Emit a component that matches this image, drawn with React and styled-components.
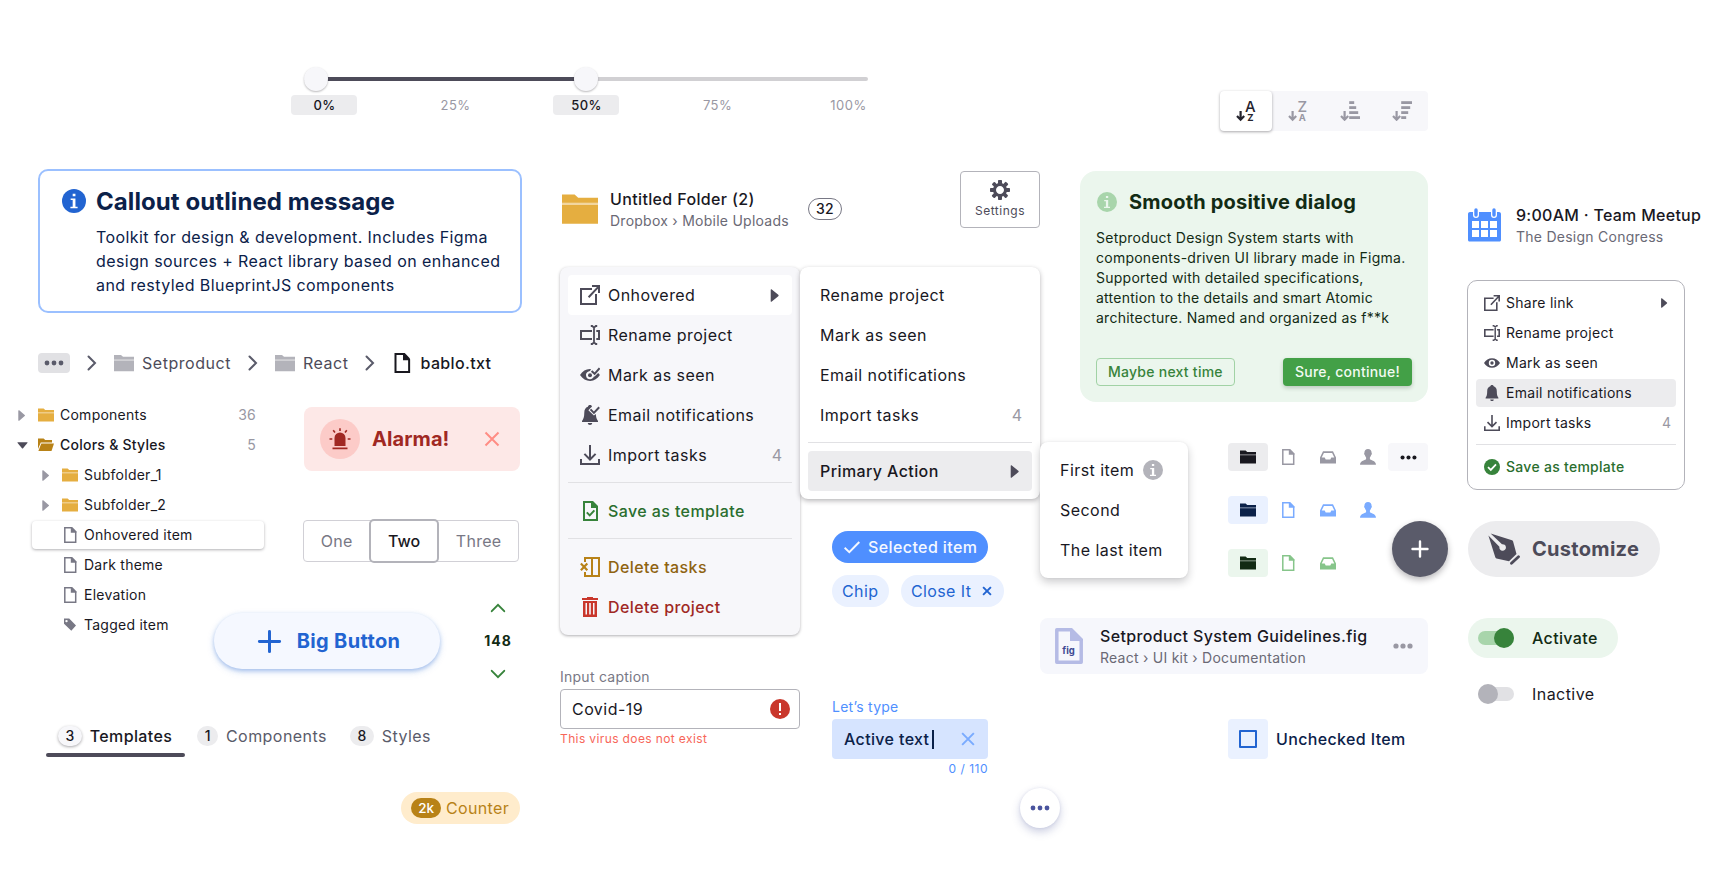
import React, { useState } from "react";
import styled, { createGlobalStyle, css } from "styled-components";

const Svg = ({ size = 20, box = 20, children, ...rest }) => (
  <svg
    width={size}
    height={size}
    viewBox={`0 0 ${box} ${box}`}
    fill="none"
    stroke="none"
    {...rest}
  >
    {children}
  </svg>
);

const line = { stroke: "currentColor", strokeWidth: 2 };

const ShareIcon = ({ size }) => (
  <Svg size={size}>
    <path {...line} d="M12 4H1v15h15V9" />
    <path {...line} d="M8.6 12.2L18.6 1.6M12 1h7v7" />
  </Svg>
);

const RenameIcon = ({ size }) => (
  <Svg size={size}>
    <path {...line} d="M12 6H1v8h11M16.3 6H19v8h-2.7" />
    <path {...line} strokeWidth="1.8" d="M14 2v16M10.8 1h1.4L14 2.6 15.8 1h1.4M10.8 19h1.4l1.8-1.6 1.8 1.6h1.4" />
  </Svg>
);

const EyeIcon = ({ size }) => (
  <Svg size={size}>
    <path
      fill="currentColor"
      fillRule="evenodd"
      d="M10 4C5.8 4 2.4 6.4 0 10c2.4 3.6 5.8 6 10 6s7.6-2.4 10-6c-2.4-3.6-5.8-6-10-6zm0 10a4 4 0 110-8 4 4 0 010 8z"
    />
    <circle cx="10" cy="10" r="2.1" fill="currentColor" />
  </Svg>
);

const EyeCheckIcon = ({ size }) => (
  <Svg size={size}>
    <path
      fill="currentColor"
      d="M11 4.1C6.5 3.6 2.7 6 0 10c2.6 3.7 6.1 6 10.2 6 4 0 7.3-2.3 9.7-5.9l-1.7-2.2-3.6 3.6-.7.1c-.4 1.5-1.9 2.6-3.8 2.6a4 4 0 01-1.6-7.7L10 6z"
    />
    <circle cx="10" cy="10.2" r="2" fill="currentColor" />
    <path {...line} d="M11.6 6.1l3 2.7 5-5.7" />
  </Svg>
);

const BellIcon = ({ size }) => (
  <Svg size={size}>
    <path
      fill="currentColor"
      d="M10 0c1.2 0 2 .7 2.1 1.7C14.6 2.5 16 4.7 16 7.5c0 4.5.6 6.5 2 8.5v1H2v-1c1.4-2 2-4 2-8.5 0-2.8 1.4-5 3.9-5.8C8 .7 8.8 0 10 0zM7.8 18h4.4c0 1.2-.9 2-2.2 2s-2.2-.8-2.2-2z"
    />
  </Svg>
);

const BellCheckIcon = ({ size }) => (
  <Svg size={size}>
    <path
      fill="currentColor"
      d="M10 0c1.1 0 1.8.5 2 1.5l-3.6 3.7 5.5 5.3 1.9-1.5c.2 3 .8 5 2.2 7v1H2v-1c1.4-2 2.3-4 2.3-8.5 0-2.8 1.1-5 3.6-5.8C8.100.7 8.8 0 10 0zM7.8 18h4.4c0 1.2-.9 2-2.2 2s-2.2-.8-2.2-2z"
    />
    <path {...line} d="M10.5 4.4l3.4 3.5 5.3-5.7" />
  </Svg>
);

const ImportIcon = ({ size }) => (
  <Svg size={size}>
    <path {...line} d="M10 0v14M4.4 8.9l5.6 5.6 5.6-5.6M1 14v5h18v-5" />
  </Svg>
);

const SavedIcon = () => (
  <Svg>
    <path {...line} d="M12 1H4v18h13V6" />
    <path fill="currentColor" d="M11 0h2l5 5v2h-7z" />
    <path {...line} d="M6.8 11.4l2.9 3 4.7-5" />
  </Svg>
);

const RemoveColumnIcon = () => (
  <Svg>
    <path {...line} d="M5 5V1h14v18H5v-4M12 1v18" />
    <path {...line} strokeWidth="2.2" d="M.9 6.6l6.4 6.6M7.3 6.6L.9 13.2" />
  </Svg>
);

const TrashIcon = () => (
  <Svg>
    <path
      fill="currentColor"
      fillRule="evenodd"
      d="M7 0h6v1h5v2H2V1h5zM3 4h14v16H3zM5.5 6v11.5H7V6zM9.2 6v11.5h1.6V6zM13 6v11.5h1.5V6z"
    />
  </Svg>
);

const CheckCircleIcon = ({ size }) => (
  <Svg size={size}>
    <circle cx="10" cy="10" r="10" fill="currentColor" />
    <path d="M5 10.3l3.5 3.4L15 6.8" stroke="#fff" strokeWidth="2.2" />
  </Svg>
);

const InfoIcon = ({ size, mark = "#fff" }) => (
  <Svg size={size}>
    <circle cx="10" cy="10" r="10" fill="currentColor" />
    <path fill={mark} d="M8.9 4h2.3v2H8.9zM7.2 8h4v6.8H13V16H7v-1.2h1.9V9.2H7.2z" />
  </Svg>
);

const ErrorIcon = () => (
  <Svg>
    <circle cx="10" cy="10" r="10" fill="#c9372c" />
    <path fill="#fff" d="M9 4h2v8H9zM9 14h2v2H9z" />
  </Svg>
);

const FolderIcon = ({ size = 16 }) => (
  <Svg size={size} box={16}>
    <path fill="currentColor" d="M0 1.5h5.6L7.2 3H16v2.2H0zM0 6.2h16v8.3H0z" />
    <path fill="currentColor" opacity="0.5" d="M0 5h16v1.4H0z" />
  </Svg>
);

const FolderOpenIcon = () => (
  <Svg size={16} box={16}>
    <path fill="currentColor" d="M0 1.5h5.6L7.2 3H14v2.5H2.8L0 12z" />
    <path fill="currentColor" d="M3.3 6.5H16L13.5 14H.4z" />
  </Svg>
);

const DocIcon = ({ size = 16, weight = 1.5 }) => (
  <Svg size={size} box={16}>
    <path stroke="currentColor" strokeWidth={weight} d="M9.5.8H2.8v14.4h10.9V5" />
    <path fill="currentColor" d="M8.8 0h1.4l4.2 4.3v1.5H8.8z" />
  </Svg>
);

const TagIcon = () => (
  <Svg size={16} box={16}>
    <path
      fill="currentColor"
      fillRule="evenodd"
      d="M2 1.5h5.2L14 8.6 9.3 13.7 2 6.8zM4.5 2.9a1.2 1.2 0 100 2.4 1.2 1.2 0 000-2.4z"
    />
  </Svg>
);

const TrayIcon = () => (
  <Svg size={16} box={16}>
    <path
      fill="currentColor"
      fillRule="evenodd"
      d="M3 2.3h10l3 6.2v6H0v-6zM3.9 4L1.7 8.5h3l1 2h4.6l1-2h3L12.1 4z"
    />
  </Svg>
);

const UserIcon = () => (
  <Svg size={16} box={16}>
    <path
      fill="currentColor"
      d="M8 0c2.2 0 3.6 1.5 3.6 3.7 0 .4.3.5.3 1 0 .7-.4 1-.7 1.4-.2.9-.7 1.7-1.3 2.3v1.7c.2 1.3 6.1 1.4 6.1 5.7H0c0-4.3 5.9-4.4 6.1-5.7V8.4c-.6-.6-1.1-1.4-1.3-2.3-.3-.4-.7-.7-.7-1.4 0-.5.3-.6.3-1C4.4 1.5 5.8 0 8 0z"
    />
  </Svg>
);

const DotsIcon = ({ size = 20, r = 2.4 }) => (
  <Svg size={size}>
    <circle cx="3" cy="10" r={r} fill="currentColor" />
    <circle cx="10" cy="10" r={r} fill="currentColor" />
    <circle cx="17" cy="10" r={r} fill="currentColor" />
  </Svg>
);

const CrossIcon = ({ size = 20, weight = 2 }) => (
  <Svg size={size}>
    <path stroke="currentColor" strokeWidth={weight} d="M3.5 3.5l13 13M16.5 3.5l-13 13" />
  </Svg>
);

const PlusIcon = ({ size = 20, weight = 2 }) => (
  <Svg size={size}>
    <path
      stroke="currentColor"
      strokeWidth={weight}
      strokeLinecap="round"
      d="M10 2.5v15M2.5 10h15"
    />
  </Svg>
);

const ChevronIcon = ({ dir = "right" }) => {
  const paths = {
    right: "M6.5 3.5L13 10l-6.5 6.5",
    up: "M2.2 14L10 6l7.8 8",
    down: "M2.2 6l7.8 8 7.8-8",
  };
  return (
    <Svg size={dir === "right" ? 20 : 16}>
      <path
        stroke="currentColor"
        strokeWidth={dir === "right" ? 2 : 2.4}
        strokeLinecap="round"
        d={paths[dir]}
      />
    </Svg>
  );
};

const CaretIcon = ({ size = 12, down }) => (
  <Svg size={size} box={12}>
    <path
      fill="currentColor"
      d={
        down
          ? "M1 2.5h10c.5 0 .6.5.3.9L6.6 9c-.4.4-.8.4-1.2 0L.7 3.4c-.3-.4-.2-.9.3-.9z"
          : "M2.5.8c0-.6.5-.8 1-.4l6 5c.5.4.5.8 0 1.2l-6 5c-.5.4-1 .2-1-.4z"
      }
    />
  </Svg>
);

const CogIcon = () => (
  <Svg>
    <path
      fill="currentColor"
      d="M19 8h-2.31c-.14-.46-.33-.89-.56-1.3l1.7-1.7a.996.996 0 000-1.41l-1.41-1.41a.996.996 0 00-1.41 0l-1.7 1.7c-.41-.22-.84-.41-1.3-.55V1c0-.55-.45-1-1-1H9c-.55 0-1 .45-1 1v2.33c-.48.14-.94.34-1.37.58L5 2.28a.972.972 0 00-1.36 0L2.28 3.64c-.37.38-.37.99 0 1.36L3.9 6.62c-.24.44-.44.89-.59 1.38H1c-.55 0-1 .45-1 1v2c0 .55.45 1 1 1h2.31c.14.46.33.89.56 1.3L2.17 15a.996.996 0 000 1.41l1.41 1.41c.39.39 1.02.39 1.41 0l1.7-1.7c.41.22.84.41 1.3.55V19c0 .55.45 1 1 1h2c.55 0 1-.45 1-1v-2.33c.48-.14.94-.35 1.37-.59L15 17.72c.37.37.98.37 1.36 0l1.36-1.36c.37-.37.37-.98 0-1.36l-1.62-1.62c.24-.43.45-.89.6-1.38H19c.55 0 1-.45 1-1V9c0-.55-.45-1-1-1zm-9 6c-2.21 0-4-1.79-4-4s1.79-4 4-4 4 1.79 4 4-1.79 4-4 4z"
    />
  </Svg>
);

const SirenIcon = () => (
  <Svg size={22} box={22}>
    <path
      fill="currentColor"
      d="M5.5 18V10a5.5 5.5 0 0111 0v8zM3.5 19.5h15v1.8h-15z"
    />
    <path
      {...line}
      strokeWidth="1.6"
      d="M11 .3V3M4.2 2.3L6 4.6M17.8 2.3L16 4.6M.5 11H3.3M18.7 11h2.8"
    />
  </Svg>
);

const CalendarIcon = () => (
  <Svg size={34} box={34}>
    <path
      fill="currentColor"
      fillRule="evenodd"
      d="M2 4h3v3a3 3 0 006 0V4h12v3a3 3 0 006 0V4h2c1.1 0 2 .9 2 2v26c0 .8-.7 1.5-1.5 1.5h-30C.7 33.5 0 32.8 0 32V6c0-1.1.9-2 2-2zM4 13v7h7v-7zM13 13v7h7v-7zM22 13v7h7v-7zM4 22v7h7v-7zM13 22v7h7v-7zM22 22v7h7v-7z"
    />
    <path stroke="currentColor" strokeWidth="3.4" strokeLinecap="round" d="M8 2v5M26 2v5" />
  </Svg>
);

const NibIcon = () => (
  <Svg size={32} box={32}>
    <path
      fill="currentColor"
      d="M2.6.4L24 7.3c.6.2 1 .6 1.1 1.2L28.5 21 21 28.2 8.5 25.4c-.6-.1-1-.5-1.2-1.1L.4 2.6l11 11.2A3.3 3.3 0 1014 11.2z"
    />
    <path stroke="currentColor" strokeWidth="2.8" strokeLinecap="round" d="M23.5 30.3l7-6.6" />
  </Svg>
);

const FigFileIcon = () => (
  <svg width="28" height="36" viewBox="0 0 28 36">
    <path fill="none" stroke="#b5bbe5" strokeWidth="3.5" strokeLinejoin="round" d="M16 1.8H1.8v32.4h24.4V13" />
    <path fill="#b5bbe5" d="M15 0h2l11 11v2H15z" />
    <text x="13.5" y="26" textAnchor="middle" fontFamily="Inter, sans-serif" fontSize="9.5" fontWeight="700" letterSpacing="0" fill="#3f4a93">
      fig
    </text>
  </svg>
);

const SortArrow = () => (
  <path {...line} strokeWidth="2.2" d="M4.6 10V19M1 15l3.6 3.7L8.2 15" />
);

const SortLettersIcon = ({ top, bottom }) => (
  <Svg overflow="visible">
    <SortArrow />
    <text x="14.3" y="11" textAnchor="middle" fontFamily="Inter, sans-serif" fontSize="15" fontWeight="500" fill="currentColor">
      {top}
    </text>
    <text x="14.3" y="20" textAnchor="middle" fontFamily="Inter, sans-serif" fontSize="9.5" fontWeight="700" fill="currentColor">
      {bottom}
    </text>
  </Svg>
);

const SortBarsIcon = ({ widths }) => (
  <Svg>
    <SortArrow />
    {widths.map((w, i) => (
      <path key={w} stroke="currentColor" strokeWidth="2.8" d={`M9.2 ${1.6 + i * 5}h${w}`} />
    ))}
  </Svg>
);

const MAIN_MENU = [
  { label: "Onhovered", icon: <ShareIcon />, arrow: true, bg: "#fff" },
  { label: "Rename project", icon: <RenameIcon /> },
  { label: "Mark as seen", icon: <EyeCheckIcon /> },
  { label: "Email notifications", icon: <BellCheckIcon /> },
  { label: "Import tasks", icon: <ImportIcon />, count: 4 },
  { divider: true },
  { label: "Save as template", icon: <SavedIcon />, color: "#2a6e2e", iconColor: "#37833b", medium: true },
  { divider: true },
  { label: "Delete tasks", icon: <RemoveColumnIcon />, color: "#8f6310", iconColor: "#b88217", medium: true },
  { label: "Delete project", icon: <TrashIcon />, color: "#a02823", iconColor: "#c9372c", medium: true },
];

const SUB_MENU = [
  { label: "Rename project" },
  { label: "Mark as seen" },
  { label: "Email notifications" },
  { label: "Import tasks", count: 4 },
  { divider: true },
  { label: "Primary Action", arrow: true, bg: "#ececee", medium: true },
];

const LAST_MENU = [
  { label: "First item", info: true },
  { label: "Second" },
  { label: "The last item" },
];

const SMALL_MENU = [
  { label: "Share link", icon: <ShareIcon size={16} />, arrow: true },
  { label: "Rename project", icon: <RenameIcon size={16} /> },
  { label: "Mark as seen", icon: <EyeIcon size={16} /> },
  { label: "Email notifications", icon: <BellIcon size={16} />, bg: "#ececee" },
  { label: "Import tasks", icon: <ImportIcon size={16} />, count: 4 },
  { divider: true },
  { label: "Save as template", icon: <CheckCircleIcon size={16} />, color: "#2a6e2e", iconColor: "#37833b", medium: true },
];

const TREE = [
  { label: "Components", type: "folder", level: 1, count: 36 },
  { label: "Colors & Styles", type: "open", level: 1, count: 5 },
  { label: "Subfolder_1", type: "folder", level: 2 },
  { label: "Subfolder_2", type: "folder", level: 2 },
  { label: "Onhovered item", type: "doc", level: 2, hovered: true },
  { label: "Dark theme", type: "doc", level: 2 },
  { label: "Elevation", type: "doc", level: 2 },
  { label: "Tagged item", type: "tag", level: 2 },
];

const TREE_ICONS = {
  folder: { icon: <FolderIcon />, color: "#e5ae40" },
  open: { icon: <FolderOpenIcon />, color: "#b88217" },
  doc: { icon: <DocIcon />, color: "#787885" },
  tag: { icon: <TagIcon />, color: "#787885" },
};

const STEPS = ["0%", "25%", "50%", "75%", "100%"];

const SORTS = [
  <SortLettersIcon top="A" bottom="Z" />,
  <SortLettersIcon top="Z" bottom="A" />,
  <SortBarsIcon widths={[5, 7, 9, 10.8]} />,
  <SortBarsIcon widths={[10.8, 9, 7, 5]} />,
];

const TABS = [
  ["3", "Templates"],
  ["1", "Components"],
  ["8", "Styles"],
];

const Menu = ({ items, small, ...rest }) => (
  <MenuBox {...rest}>
    {items.map((item, index) =>
      item.divider ? (
        <MenuDivider key={index} />
      ) : (
        <MenuItem key={index} $small={small} $bg={item.bg} $color={item.color} $medium={item.medium}>
          {item.icon && (
            <MenuIcon $small={small} $color={item.iconColor}>
              {item.icon}
            </MenuIcon>
          )}
          {item.label}
          {item.info && (
            <MenuInfo>
              <InfoIcon />
            </MenuInfo>
          )}
          {item.arrow && (
            <MenuArrow $small={small}>
              <CaretIcon size={small ? 10 : 13} />
            </MenuArrow>
          )}
          {item.count && <MenuCount>{item.count}</MenuCount>}
        </MenuItem>
      )
    )}
  </MenuBox>
);

const App = () => {
  const [sort, setSort] = useState(0);
  const [segment, setSegment] = useState("Two");
  const [tab, setTab] = useState("Templates");
  const [votes, setVotes] = useState(148);

  return (
    <Page>
      <GlobalStyle />
      <TopBar>
        <Slider>
          <SliderTrack>
            <SliderFill />
            <Thumb $left={0} />
            <Thumb $left={270} />
          </SliderTrack>
          <SliderLabels>
            {STEPS.map((step, i) => (
              <SliderLabel key={step} $active={i % 2 === 0 && i < 4}>
                {step}
              </SliderLabel>
            ))}
          </SliderLabels>
        </Slider>
        <SortGroup>
          {SORTS.map((icon, i) => (
            <SortButton key={i} $active={sort === i} onClick={() => setSort(i)}>
              {icon}
            </SortButton>
          ))}
        </SortGroup>
      </TopBar>

      <Main>
        <NavColumn>
          <Callout>
            <CalloutIcon>
              <InfoIcon size={24} />
            </CalloutIcon>
            <div>
              <CalloutTitle>Callout outlined message</CalloutTitle>
              <CalloutText>
                Toolkit for design &amp; development. Includes Figma
                <br />
                design sources + React library based on enhanced
                <br />
                and restyled BlueprintJS components
              </CalloutText>
            </div>
          </Callout>

          <Breadcrumbs>
            <CrumbMore>
              <DotsIcon />
            </CrumbMore>
            <ChevronIcon />
            <Crumb>
              <FolderIcon size={20} />
              <span>Setproduct</span>
            </Crumb>
            <ChevronIcon />
            <Crumb>
              <FolderIcon size={20} />
              <span>React</span>
            </Crumb>
            <ChevronIcon />
            <Crumb $current>
              <DocIcon size={20} weight={1.6} />
              <span>bablo.txt</span>
            </Crumb>
          </Breadcrumbs>

          <TreeRow>
            <Tree>
              {TREE.map((node) => (
                <TreeItem
                  key={node.label}
                  $level={node.level}
                  $hovered={node.hovered}
                  $open={node.type === "open"}
                >
                  <TreeCaret $open={node.type === "open"}>
                    {node.type === "folder" && <CaretIcon size={11} />}
                    {node.type === "open" && <CaretIcon size={11} down />}
                  </TreeCaret>
                  <TreeIcon $color={TREE_ICONS[node.type].color}>
                    {TREE_ICONS[node.type].icon}
                  </TreeIcon>
                  {node.label}
                  {node.count && <TreeCount>{node.count}</TreeCount>}
                </TreeItem>
              ))}
            </Tree>

            <ControlStack>
              <Alarm>
                <AlarmIcon>
                  <SirenIcon />
                </AlarmIcon>
                <AlarmText>Alarma!</AlarmText>
                <CrossIcon weight={2} />
              </Alarm>
              <Segmented>
                {["One", "Two", "Three"].map((name) => (
                  <Segment key={name} $active={segment === name} onClick={() => setSegment(name)}>
                    {name}
                  </Segment>
                ))}
              </Segmented>
              <ActionRow>
                <BigButton>
                  <PlusIcon size={27} weight={2.2} />
                  Big Button
                </BigButton>
                <Stepper>
                  <StepButton onClick={() => setVotes(votes + 1)}>
                    <ChevronIcon dir="up" />
                  </StepButton>
                  <StepValue>{votes}</StepValue>
                  <StepButton onClick={() => setVotes(votes - 1)}>
                    <ChevronIcon dir="down" />
                  </StepButton>
                </Stepper>
              </ActionRow>
            </ControlStack>
          </TreeRow>

          <Tabs>
            {TABS.map(([count, name]) => (
              <Tab key={name} $active={tab === name} onClick={() => setTab(name)}>
                <TabBadge $active={tab === name}>{count}</TabBadge>
                {name}
              </Tab>
            ))}
          </Tabs>

          <Counter>
            <CounterBadge>2k</CounterBadge>
            Counter
          </Counter>
        </NavColumn>

        <MenuColumn>
          <FolderHeader>
            <HeaderIcon>
              <FolderIcon size={36} />
            </HeaderIcon>
            <div>
              <CardTitle>Untitled Folder (2)</CardTitle>
              <CardSub>Dropbox › Mobile Uploads</CardSub>
            </div>
            <CountPill>32</CountPill>
            <SettingsButton>
              <CogIcon />
              Settings
            </SettingsButton>
          </FolderHeader>

          <MenuRow>
            <MainMenu items={MAIN_MENU} />
            <SubColumn>
              <SubMenu items={SUB_MENU} />
              <Chips>
                <Chip $selected>
                  <Svg size={16} box={16}>
                    <path stroke="currentColor" strokeWidth="2" d="M.6 8.8l4.7 4.4L15.3 3" />
                  </Svg>
                  Selected item
                </Chip>
                <Chip>Chip</Chip>
                <Chip>
                  Close It
                  <CrossIcon size={12} weight={3.2} />
                </Chip>
              </Chips>
            </SubColumn>
          </MenuRow>

          <FormRow>
            <Field>
              <FieldLabel>Input caption</FieldLabel>
              <FieldBox>
                Covid-19
                <ErrorIcon />
              </FieldBox>
              <FieldHint>This virus does not exist</FieldHint>
            </Field>
            <Field $active>
              <FieldLabel $active>Let’s type</FieldLabel>
              <FieldBox $active>
                Active text
                <TextCaret />
                <FieldClear>
                  <CrossIcon weight={2.2} size={18} />
                </FieldClear>
              </FieldBox>
              <FieldHint $active>0 / 110</FieldHint>
            </Field>
          </FormRow>

          <MoreButton>
            <DotsIcon />
          </MoreButton>
        </MenuColumn>

        <DialogColumn>
          <Dialog>
            <DialogTitle>
              <InfoIcon mark="#ebf6ed" />
              <span>Smooth positive dialog</span>
            </DialogTitle>
            <DialogText>
              Setproduct Design System starts with
              <br />
              components-driven UI library made in Figma.
              <br />
              Supported with detailed specifications,
              <br />
              attention to the details and smart Atomic
              <br />
              architecture. Named and organized as f**k
            </DialogText>
            <DialogActions>
              <DialogButton>Maybe next time</DialogButton>
              <DialogButton $primary>Sure, continue!</DialogButton>
            </DialogActions>
          </Dialog>

          <ToolRow>
            <LastMenu items={LAST_MENU} />
            <Toolbars>
              <Toolbar $color="#9998a3" $ink="#19181f" $bg="#ececee">
                <ToolCell><FolderIcon /></ToolCell>
                <ToolCell><DocIcon /></ToolCell>
                <ToolCell><TrayIcon /></ToolCell>
                <ToolCell><UserIcon /></ToolCell>
                <ToolMore>
                  <DotsIcon size={17} />
                </ToolMore>
              </Toolbar>
              <Toolbar $color="#7aabff" $ink="#0b2149" $bg="#eaf1ff">
                <ToolCell><FolderIcon /></ToolCell>
                <ToolCell><DocIcon /></ToolCell>
                <ToolCell><TrayIcon /></ToolCell>
                <ToolCell><UserIcon /></ToolCell>
              </Toolbar>
              <Toolbar $color="#86c58a" $ink="#122b14" $bg="#ebf6ed">
                <ToolCell><FolderIcon /></ToolCell>
                <ToolCell><DocIcon /></ToolCell>
                <ToolCell><TrayIcon /></ToolCell>
              </Toolbar>
              <Fab>
                <PlusIcon weight={2.4} />
              </Fab>
            </Toolbars>
          </ToolRow>

          <FileCard>
            <FigFileIcon />
            <FileText>
              <CardTitle>Setproduct System Guidelines.fig</CardTitle>
              <CardSub>React › UI kit › Documentation</CardSub>
            </FileText>
            <DotsIcon r={2.6} />
          </FileCard>

          <CheckRow>
            <CheckTile>
              <CheckSquare />
            </CheckTile>
            Unchecked Item
          </CheckRow>
        </DialogColumn>

        <SideColumn>
          <EventHeader>
            <CalendarIcon />
            <div>
              <CardTitle>9:00AM · Team Meetup</CardTitle>
              <CardSub>The Design Congress</CardSub>
            </div>
          </EventHeader>

          <OutlinedMenu items={SMALL_MENU} small />

          <CustomizeButton>
            <NibIcon />
            Customize
          </CustomizeButton>

          <SwitchRow $on>
            <SwitchTrack $on />
            Activate
          </SwitchRow>
          <SwitchRow>
            <SwitchTrack />
            Inactive
          </SwitchRow>
        </SideColumn>
      </Main>
    </Page>
  );
};

export default App;

const GlobalStyle = createGlobalStyle`
  * {
    box-sizing: border-box;
  }
  body {
    margin: 0;
    background: #fff;
  }
  svg {
    display: block;
    flex: none;
  }
  button {
    border: none;
    background: none;
    padding: 0;
    font: inherit;
    letter-spacing: inherit;
    color: inherit;
    cursor: pointer;
  }
`;

const regular16 = css`
  font-size: 16px;
  line-height: 24px;
  font-weight: 400;
  letter-spacing: 0.45px;
`;
const medium16 = css`
  font-size: 16px;
  line-height: 24px;
  font-weight: 500;
  letter-spacing: 0.36px;
`;
const regular14 = css`
  font-size: 14px;
  line-height: 20px;
  font-weight: 400;
  letter-spacing: 0.25px;
`;

const Page = styled.div`
  width: 1710px;
  height: 894px;
  overflow: hidden;
  font-family: Inter, sans-serif;
  color: #19181f;
  ${regular16}
  white-space: nowrap;
`;

const TopBar = styled.div`
  height: 169px;
  display: flex;
  align-items: flex-start;
`;
const Slider = styled.div`
  width: 590px;
  margin: 67px 0 0 291px;
`;
const SliderTrack = styled.div`
  position: relative;
  height: 4px;
  margin: 10px 13px;
  border-radius: 2px;
  background: #d1d0d3;
`;
const SliderFill = styled.div`
  width: 50%;
  height: 4px;
  border-radius: 2px;
  background: #4d4b59;
`;
const Thumb = styled.div`
  position: absolute;
  top: -10px;
  left: ${(props) => props.$left}px;
  width: 24px;
  height: 24px;
  border-radius: 50%;
  background: #f7f7fa;
  box-shadow: 0 1px 2px rgba(25, 24, 31, 0.3);
`;
const SliderLabels = styled.div`
  display: flex;
  justify-content: space-between;
  margin-top: 14px;
`;
const SliderLabel = styled.div`
  width: 66px;
  height: 20px;
  padding-left: 1px;
  border-radius: 4px;
  text-align: center;
  font-size: 13px;
  line-height: 20px;
  letter-spacing: 0.45px;
  font-weight: ${(props) => (props.$active ? 500 : 400)};
  color: ${(props) => (props.$active ? "#19181f" : "#9998a3")};
  background: ${(props) => (props.$active ? "#ececee" : "transparent")};
`;

const SortGroup = styled.div`
  display: flex;
  margin: 91px 0 0 339px;
  border-radius: 4px;
  background: #f7f7fa;
`;
const SortButton = styled.button`
  width: 52px;
  height: 40px;
  display: flex;
  align-items: center;
  justify-content: center;
  border-radius: 4px;
  letter-spacing: 0;
  color: ${(props) => (props.$active ? "#25242e" : "#9998a3")};
  ${(props) =>
    props.$active &&
    css`
      background: #fff;
      box-shadow: 0 1px 3px rgba(25, 24, 31, 0.38);
    `}
`;

const Main = styled.div`
  display: flex;
  align-items: flex-start;
  padding-left: 18px;
`;

const NavColumn = styled.div`
  width: 504px;
  margin-right: 38px;
  flex: none;
`;
const Callout = styled.div`
  width: 484px;
  height: 144px;
  margin-left: 20px;
  padding: 16px 0 0 22px;
  display: flex;
  gap: 10px;
  border: 2px solid #9bc0ff;
  border-radius: 10px;
  color: #0b2149;
`;
const CalloutIcon = styled.div`
  margin-top: 2px;
  color: #2264d1;
`;
const CalloutTitle = styled.div`
  font-size: 24px;
  line-height: 30px;
  font-weight: 700;
  letter-spacing: 0.08px;
`;
const CalloutText = styled.div`
  margin-top: 8px;
  letter-spacing: 0.42px;
`;

const Breadcrumbs = styled.div`
  margin: 40px 0 0 20px;
  height: 20px;
  display: flex;
  align-items: center;
  gap: 12px;
  color: #5a5b6a;
`;
const CrumbMore = styled.div`
  width: 32px;
  height: 20px;
  display: flex;
  align-items: center;
  justify-content: center;
  border-radius: 4px;
  background: #e1e1e4;
`;
const Crumb = styled.div`
  display: flex;
  align-items: center;
  gap: 8px;
  color: #b3b3ba;
  letter-spacing: 0.53px;

  span {
    color: #4d4b59;
  }

  ${(props) =>
    props.$current &&
    css`
      ${medium16}
      color: #19181f;

      span {
        color: #19181f;
      }
    `}
`;

const TreeRow = styled.div`
  display: flex;
  align-items: flex-start;
  margin-top: 28px;
`;
const Tree = styled.div`
  width: 246px;
  flex: none;
  display: flex;
  flex-direction: column;
  gap: 2px;
`;
const TreeItem = styled.div`
  height: 28px;
  display: flex;
  align-items: center;
  margin-left: ${(props) => (props.$level === 2 ? 14 : 0)}px;
  padding: 0 8px 0 ${(props) => (props.$level === 2 ? 10 : 0)}px;
  border-radius: 4px;
  ${regular14}
  font-weight: ${(props) => (props.$open ? 500 : 400)};
  ${(props) =>
    props.$hovered &&
    css`
      background: #fff;
      box-shadow: 0 1px 3px rgba(25, 24, 31, 0.34);
    `}
`;
const TreeCaret = styled.div`
  width: 20px;
  margin-left: ${(props) => (props.$open ? -1 : -2)}px;
  margin-right: ${(props) => (props.$open ? 1 : 2)}px;
  color: ${(props) => (props.$open ? "#4d4b59" : "#9998a3")};
`;
const TreeIcon = styled.div`
  margin-right: 6px;
  color: ${(props) => props.$color};
`;
const TreeCount = styled.div`
  margin-left: auto;
  color: #9998a3;
  font-weight: 400;
`;

const ControlStack = styled.div`
  width: 216px;
  margin: 6px 0 0 40px;
`;
const Alarm = styled.div`
  height: 64px;
  padding: 0 18px 0 16px;
  display: flex;
  align-items: center;
  border-radius: 8px;
  background: #fde8e7;
  color: #ff8d85;
`;
const AlarmIcon = styled.div`
  width: 40px;
  height: 40px;
  display: flex;
  align-items: center;
  justify-content: center;
  border-radius: 50%;
  background: #fccbc8;
  color: #a02823;
`;
const AlarmText = styled.div`
  flex: 1;
  margin-left: 12px;
  font-size: 20px;
  font-weight: 700;
  letter-spacing: 0.08px;
  color: #a02823;
`;
const Segmented = styled.div`
  height: 42px;
  margin: 49px 1px 0 -1px;
  display: flex;
  align-items: center;
  border: 1px solid #d1d0d6;
  border-radius: 4px;
`;
const Segment = styled.button`
  flex: 1 0 auto;
  color: #787885;
  letter-spacing: 0.25px;
  ${(props) =>
    props.$active &&
    css`
      flex: none;
      width: 70px;
      height: 44px;
      border: 2px solid #b3b3ba;
      border-radius: 5px;
      font-weight: 500;
      letter-spacing: 0;
      color: #19181f;
    `}
`;
const ActionRow = styled.div`
  display: flex;
  align-items: center;
  margin: 38px 0 0 -90px;
  height: 82px;
`;
const BigButton = styled.button`
  width: 226px;
  height: 56px;
  flex: none;
  display: flex;
  align-items: center;
  justify-content: center;
  gap: 14px;
  padding-left: 2px;
  border-radius: 28px;
  background: #f5f8ff;
  box-shadow: 0 2px 4px rgba(34, 100, 209, 0.35), 0 3px 8px rgba(34, 100, 209, 0.12);
  font-size: 20px;
  font-weight: 700;
  letter-spacing: 0.35px;
  color: #2264d1;
`;
const Stepper = styled.div`
  width: 45px;
  margin-left: 36px;
  display: flex;
  flex-direction: column;
  align-items: center;
  gap: 15px;
`;
const StepButton = styled.button`
  color: #37833b;
`;
const StepValue = styled.div`
  font-size: 14px;
  line-height: 20px;
  font-weight: 700;
  letter-spacing: 0.9px;
  color: #122b14;
`;

const Tabs = styled.div`
  display: flex;
  margin: 37px 0 0 28px;
`;
const Tab = styled.button`
  height: 38px;
  padding: 0 11px 4px 12px;
  display: flex;
  align-items: center;
  gap: 8px;
  position: relative;
  color: #5a5b6a;
  ${(props) =>
    props.$active &&
    css`
      ${medium16}
      padding-right: 13px;
      color: #19181f;

      &::after {
        content: "";
        position: absolute;
        left: 0;
        right: 0;
        bottom: 0;
        height: 4px;
        border-radius: 2px;
        background: #4d4b59;
      }
    `}
`;
const TabBadge = styled.div`
  padding: 0 7.5px;
  border-radius: 10px;
  font-size: 14px;
  line-height: 20px;
  font-weight: 500;
  letter-spacing: 0;
  color: #19181f;
  background: #ececee;
  ${(props) =>
    props.$active &&
    css`
      background: #f7f7fa;
      box-shadow: 0 1px 3px rgba(25, 24, 31, 0.38);
    `}
`;

const Counter = styled.div`
  width: fit-content;
  height: 32px;
  margin: 35px 2px 0 auto;
  padding: 0 11px 0 10px;
  display: flex;
  align-items: center;
  gap: 5px;
  border-radius: 16px;
  background: #ffeccc;
  letter-spacing: 0.33px;
  color: #b88217;
`;
const CounterBadge = styled.div`
  width: 30px;
  height: 20px;
  text-align: center;
  border-radius: 10px;
  background: #b88217;
  font-size: 13.5px;
  line-height: 20px;
  font-weight: 500;
  letter-spacing: 0;
  color: #fff;
`;

const MenuColumn = styled.div`
  width: 480px;
  flex: none;
`;
const FolderHeader = styled.div`
  height: 76px;
  margin-top: 2px;
  display: flex;
  align-items: center;
`;
const HeaderIcon = styled.div`
  margin: 0 12px 0 2px;
  color: #e5ae40;
`;
const CardTitle = styled.div`
  ${medium16}
`;
const CardSub = styled.div`
  ${regular14}
  color: #6a6975;
`;
const CountPill = styled.div`
  width: 34px;
  height: 22px;
  margin-left: 19px;
  text-align: center;
  border: 1px solid #787885;
  border-radius: 11px;
  font-size: 14px;
  line-height: 20px;
  font-weight: 500;
  letter-spacing: 0.1px;
`;
const SettingsButton = styled.button`
  width: 80px;
  height: 57px;
  margin-left: auto;
  align-self: flex-start;
  display: flex;
  flex-direction: column;
  align-items: center;
  justify-content: center;
  gap: 3px;
  border: 1px solid #b3b3ba;
  border-radius: 4px;
  font-size: 12px;
  line-height: 16px;
  letter-spacing: 0.5px;
  color: #4d4b59;
`;

const MenuRow = styled.div`
  display: flex;
  margin-top: 20px;
`;
const MenuBox = styled.div`
  flex: none;
  padding: 8px;
  border-radius: 8px;
  background: #fff;
`;
const MainMenu = styled(Menu)`
  width: 240px;
  background: #f7f7fa;
  box-shadow: 0 1px 3px rgba(25, 24, 31, 0.34);
`;
const SubColumn = styled.div`
  width: 240px;
  flex: none;
`;
const SubMenu = styled(Menu)`
  position: relative;
  box-shadow: 0 2px 5px rgba(25, 24, 31, 0.3), 0 0 1px rgba(25, 24, 31, 0.08);
`;
const LastMenu = styled(Menu)`
  position: relative;
  width: 148px;
  box-shadow: 0 4px 9px rgba(25, 24, 31, 0.22), 0 0 2px rgba(25, 24, 31, 0.08);
`;
const OutlinedMenu = styled(Menu)`
  width: 218px;
  margin: 33px 0 0 -1px;
  border: 1px solid #b3b3ba;
  border-radius: 10px;
`;
const MenuItem = styled.div`
  height: 40px;
  padding: 0 10px 0 12px;
  display: flex;
  align-items: center;
  border-radius: 4px;
  background: ${(props) => props.$bg || "transparent"};
  color: ${(props) => props.$color || "#19181f"};
  ${(props) =>
    props.$medium &&
    css`
      ${medium16}
      letter-spacing: 0.4px;
    `}
  ${(props) =>
    props.$small &&
    css`
      height: 28px;
      padding: 0 5px 0 8px;
      margin-bottom: 2px;
      ${regular14}
      letter-spacing: 0.28px;
      font-weight: ${props.$medium ? 500 : 400};

      &:last-child {
        margin-bottom: 0;
      }
    `}
`;
const MenuIcon = styled.div`
  margin-right: ${(props) => (props.$small ? 6 : 8)}px;
  color: ${(props) => props.$color || "#4d4b59"};
`;
const MenuInfo = styled.div`
  margin-left: 9px;
  color: #b3b3ba;
`;
const MenuArrow = styled.div`
  margin-left: auto;
  margin-right: ${(props) => (props.$small ? 2 : 1)}px;
  color: #4d4b59;
`;
const MenuCount = styled.div`
  margin-left: auto;
  color: #9998a3;
  letter-spacing: 0;
`;
const MenuDivider = styled.div`
  height: 1px;
  margin: 7px 0 8px;
  background: #e1e1e4;
`;

const Chips = styled.div`
  width: 180px;
  display: flex;
  flex-wrap: wrap;
  gap: 12px;
  margin: 32px 0 0 32px;
`;
const Chip = styled.div`
  height: 32px;
  padding: 0 ${(props) => (props.$selected ? 11 : 10.5)}px;
  padding-left: ${(props) => (props.$selected ? 12 : 10)}px;
  display: flex;
  align-items: center;
  gap: ${(props) => (props.$selected ? 8 : 10)}px;
  border-radius: 16px;
  background: ${(props) => (props.$selected ? "#4f8fff" : "#eaf1ff")};
  color: ${(props) => (props.$selected ? "#f5f8ff" : "#2264d1")};
  ${medium16}
  letter-spacing: 0.4px;
  font-weight: ${(props) => (props.$selected ? 500 : 400)};
`;

const FormRow = styled.div`
  display: flex;
  gap: 32px;
  margin-top: 32px;
`;
const Field = styled.div`
  width: ${(props) => (props.$active ? 156 : 240)}px;
  margin-top: ${(props) => (props.$active ? 30 : 0)}px;
`;
const FieldLabel = styled.div`
  ${regular14}
  color: ${(props) => (props.$active ? "#4f8fff" : "#787885")};
`;
const FieldBox = styled.div`
  height: 40px;
  margin: 2px 0;
  padding: 0 9px 0 11px;
  display: flex;
  align-items: center;
  justify-content: space-between;
  border: 1px solid #b3b3ba;
  border-radius: 4px;
  ${(props) =>
    props.$active &&
    css`
      ${medium16}
      justify-content: flex-start;
      border: none;
      padding: 0 11px 0 12px;
      background: #d6e4ff;
      color: #0b2149;
    `}
`;
const TextCaret = styled.div`
  width: 2px;
  height: 19px;
  margin-left: 2.5px;
  background: #0b2149;
`;
const FieldClear = styled.div`
  margin-left: auto;
  color: #7aabff;
`;
const FieldHint = styled.div`
  font-size: 12px;
  line-height: 16px;
  letter-spacing: ${(props) => (props.$active ? 0.5 : 0.38)}px;
  text-align: ${(props) => (props.$active ? "right" : "left")};
  color: ${(props) => (props.$active ? "#4f8fff" : "#f76659")};
`;

const MoreButton = styled.button`
  width: 40px;
  height: 40px;
  display: flex;
  align-items: center;
  justify-content: center;
  margin: 11px 0 0 460px;
  border-radius: 50%;
  background: #fff;
  box-shadow: 0 4px 9px rgba(63, 74, 147, 0.26), 0 0 3px rgba(63, 74, 147, 0.12);
  color: #4a549e;
`;

const DialogColumn = styled.div`
  width: 388px;
  margin-right: 40px;
  flex: none;
`;
const Dialog = styled.div`
  height: 231px;
  margin: 2px 0 0 40px;
  padding: 16px 16px 0;
  border-radius: 16px;
  background: #ebf6ed;
  color: #122b14;
`;
const DialogTitle = styled.div`
  height: 30px;
  margin-left: 1px;
  display: flex;
  align-items: center;
  gap: 12px;
  font-size: 20px;
  font-weight: 700;
  letter-spacing: 0.19px;
  color: #a8d5ab;

  span {
    color: #122b14;
  }
`;
const DialogText = styled.div`
  margin-top: 11px;
  ${regular14}
`;
const DialogActions = styled.div`
  display: flex;
  justify-content: space-between;
  margin-top: 30px;
`;
const DialogButton = styled.button`
  height: 28px;
  padding: 0 11px;
  border: 1px solid #a1d2a5;
  border-radius: 4px;
  font-size: 14px;
  line-height: 20px;
  font-weight: 500;
  letter-spacing: 0.25px;
  color: #37833b;
  ${(props) =>
    props.$primary &&
    css`
      padding: 0 12px;
      border: none;
      background: #43a047;
      color: #f2faf3;
      box-shadow: 0 2px 4px rgba(18, 43, 20, 0.22);
    `}
`;

const ToolRow = styled.div`
  display: flex;
  margin-top: 40px;
`;
const Toolbars = styled.div`
  position: relative;
  margin: 1px 0 0 40px;
  display: flex;
  flex-direction: column;
  gap: 25px;
`;
const ToolCell = styled.div`
  width: 40px;
  height: 28px;
  display: flex;
  align-items: center;
  justify-content: center;
  border-radius: 4px;
`;
const ToolMore = styled(ToolCell)`
  background: #f7f7fa;
  color: #19181f;
`;
const Toolbar = styled.div`
  display: flex;
  color: ${(props) => props.$color};

  ${ToolCell}:first-child {
    color: ${(props) => props.$ink};
    background: ${(props) => props.$bg};
  }
`;
const Fab = styled.button`
  position: absolute;
  top: 78px;
  right: -20px;
  width: 56px;
  height: 56px;
  display: flex;
  align-items: center;
  justify-content: center;
  border-radius: 50%;
  background: #5a5b6a;
  box-shadow: 0 3px 6px rgba(25, 24, 31, 0.3);
  color: #fff;
`;

const FileCard = styled.div`
  height: 56px;
  margin-top: 40px;
  padding: 0 15px;
  display: flex;
  align-items: center;
  border-radius: 8px;
  background: #f6f7fc;
  color: #9998a3;
`;
const FileText = styled.div`
  flex: 1;
  margin-left: 17px;
  color: #19181f;
`;
const CheckRow = styled.div`
  margin: 45px 0 0 188px;
  display: flex;
  align-items: center;
  gap: 8px;
  ${medium16}
  color: #0b2149;
`;
const CheckTile = styled.div`
  width: 40px;
  height: 40px;
  display: flex;
  align-items: center;
  justify-content: center;
  border-radius: 4px;
  background: #eaf1ff;
`;
const CheckSquare = styled.div`
  width: 18px;
  height: 18px;
  border: 2px solid #2264d1;
  border-radius: 1px;
`;

const SideColumn = styled.div`
  width: 242px;
  flex: none;
`;
const EventHeader = styled.div`
  height: 44px;
  margin-top: 34px;
  display: flex;
  align-items: center;
  gap: 14px;
  color: #4f8fff;

  ${CardTitle} {
    color: #19181f;
    letter-spacing: 0.28px;
  }
`;
const CustomizeButton = styled.button`
  width: 192px;
  height: 56px;
  margin-top: 31px;
  padding-left: 20px;
  display: flex;
  align-items: center;
  gap: 12px;
  border-radius: 28px;
  background: #ececee;
  font-size: 20px;
  font-weight: 700;
  letter-spacing: 0.3px;
  color: #4d4b59;
`;
const SwitchRow = styled.div`
  width: 150px;
  height: 40px;
  margin-top: 16px;
  padding-left: 10px;
  display: flex;
  align-items: center;
  gap: 18px;
  border-radius: 20px;
  ${(props) =>
    props.$on &&
    css`
      ${medium16}
      margin-top: 41px;
      background: #ebf6ed;
      color: #122b14;
    `}
`;
const SwitchTrack = styled.div`
  position: relative;
  width: 36px;
  height: 14px;
  border-radius: 7px;
  background: ${(props) => (props.$on ? "#a8d5ab" : "#e1e1e4")};

  &::after {
    content: "";
    position: absolute;
    top: -3px;
    left: ${(props) => (props.$on ? 16 : 0)}px;
    width: 20px;
    height: 20px;
    border-radius: 50%;
    background: ${(props) => (props.$on ? "#37833b" : "#b3b3ba")};
  }
`;
